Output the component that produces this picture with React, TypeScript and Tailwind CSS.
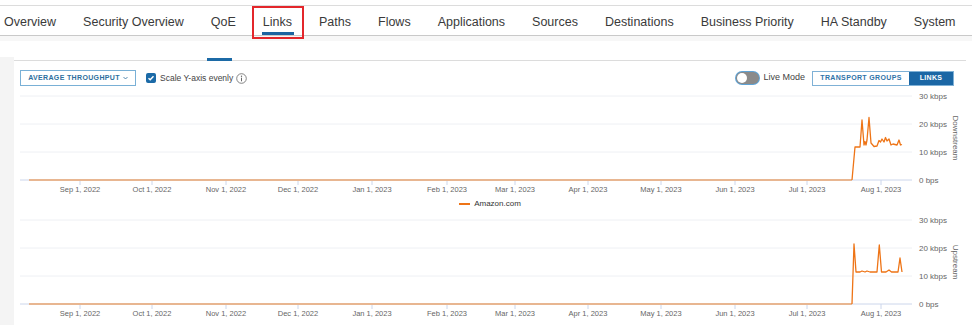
import React from 'react';

const TABS = [
  'Overview',
  'Security Overview',
  'QoE',
  'Links',
  'Paths',
  'Flows',
  'Applications',
  'Sources',
  'Destinations',
  'Business Priority',
  'HA Standby',
  'System',
];

const TICKS = [
  { x: 80, label: 'Sep 1, 2022' },
  { x: 152, label: 'Oct 1, 2022' },
  { x: 226, label: 'Nov 1, 2022' },
  { x: 298, label: 'Dec 1, 2022' },
  { x: 372, label: 'Jan 1, 2023' },
  { x: 447, label: 'Feb 1, 2023' },
  { x: 515, label: 'Mar 1, 2023' },
  { x: 588, label: 'Apr 1, 2023' },
  { x: 661, label: 'May 1, 2023' },
  { x: 735, label: 'Jun 1, 2023' },
  { x: 807, label: 'Jul 1, 2023' },
  { x: 881, label: 'Aug 1, 2023' },
];

// points in page coords, only the part after the step up
const DOWN: [number, number][] = [
  [852, 180], [855, 147], [860, 147], [862, 120], [864, 145], [865, 141.5], [866, 145],
  [867, 140], [869, 117.5], [871, 143], [874, 146.5], [877, 146], [879, 140.5],
  [880.5, 142], [882, 139], [884, 142], [885.5, 137.5], [887, 141], [889, 139],
  [891, 145], [893, 144], [897, 145], [899, 140], [900.5, 145], [902, 144.5],
];

const UP: [number, number][] = [
  [852, 304], [854, 244], [856, 272], [860, 272], [862, 271], [865, 272], [867, 271],
  [870, 272], [877, 272], [879.3, 245], [881.5, 272], [886, 272], [889, 270],
  [891.5, 272], [898, 272], [900, 258], [902, 272],
];

const FONT = '"Liberation Sans", Arial, sans-serif';

function Chart({
  top,
  height,
  base,
  title,
  points,
}: {
  top: number;
  height: number;
  base: number;
  title: string;
  points: [number, number][];
}) {
  const grid = [0, 1, 2, 3].map((i) => base - i * 28);
  const yLabels = ['0 bps', '10 kbps', '20 kbps', '30 kbps'];
  const d = points.map((p, i) => `${i === 0 ? 'M' : 'L'}${p[0]} ${p[1]}`).join(' ');
  return (
    <svg
      width={952}
      height={height}
      viewBox={`14 ${top} 952 ${height}`}
      className="block overflow-visible"
      style={{ fontFamily: FONT }}
    >
      {grid.slice(1).map((y) => (
        <line key={y} x1={20} x2={912} y1={y} y2={y} stroke="#eef0f4" strokeWidth={1} />
      ))}
      <line x1={20} x2={912} y1={base} y2={base} stroke="#ccd6eb" strokeWidth={1} />
      {TICKS.map((t) => (
        <g key={t.label}>
          <line x1={t.x} x2={t.x} y1={base} y2={base + 5} stroke="#ccd6eb" strokeWidth={1} />
          <text x={t.x} y={base + 12} fontSize={7.5} fill="#666" textAnchor="middle">
            {t.label}
          </text>
        </g>
      ))}
      {grid.map((y, i) => (
        <text key={y} x={919} y={y + 3} fontSize={8} fill="#666">
          {yLabels[i]}
        </text>
      ))}
      <text
        x={955}
        y={base - 42}
        fontSize={8}
        fill="#666"
        textAnchor="middle"
        transform={`rotate(90 955 ${base - 42})`}
        dominantBaseline="middle"
      >
        {title}
      </text>
      <line x1={29} x2={852} y1={base} y2={base} stroke="#e8b691" strokeWidth={2} />
      <path d={d} fill="none" stroke="#ee7416" strokeWidth={1.3} strokeLinejoin="round" />
    </svg>
  );
}

export default function App() {
  return (
    <div
      className="relative h-[325px] w-[972px] overflow-hidden bg-white text-[#3a3a3a]"
      style={{ fontFamily: FONT }}
    >
      <div className="h-[6px] border-b border-[#dcdcdc]" />
      <nav className="flex h-[30px] gap-[27px] border-b border-[#c9c9c9] pl-[4px]">
        {TABS.map((tab) => (
          <div key={tab} className="relative flex items-center pt-[3px] text-[12.5px] whitespace-nowrap">
            {tab}
            {tab === 'Links' && (
              <>
                <span className="absolute bottom-0 left-[-1px] right-[-2px] h-[3px] bg-[#1c63a0]" />
                <span className="absolute top-0 bottom-[-4px] left-[-11px] right-[-12px] border-2 border-[#e3262b]" />
              </>
            )}
          </div>
        ))}
      </nav>
      <div className="h-[5px] bg-[#f7f7f7]" />
      <div className="h-[16px]" />
      <div className="flex">
        <div className="w-[14px] self-stretch bg-[#f4f4f4]" />
        <div className="w-[952px]">
          <div className="h-[3px]" />
          <div className="relative h-px bg-[#dcdcdc]">
            <span className="absolute left-[193px] top-[-2px] h-[3px] w-[25px] bg-[#1c6aa6]" />
          </div>
          <div className="flex h-[34px] items-center justify-between pl-[6px] pr-[12px]">
            <div className="flex items-center">
              <button className="flex h-[16px] w-[116px] items-center justify-center gap-[3px] border border-[#79b0d6] bg-white text-[7px] font-bold tracking-[0.05em] text-[#2e6f9e]">
                AVERAGE THROUGHPUT
                <svg width="5" height="4" viewBox="0 0 5 4">
                  <path d="M0.5 1 L2.5 3 L4.5 1" fill="none" stroke="#2e6f9e" strokeWidth="0.8" />
                </svg>
              </button>
              <div className="ml-[10px] flex h-[10px] w-[10px] items-center justify-center rounded-[2px] bg-[#1b6aa7]">
                <svg width="8" height="8" viewBox="0 0 8 8">
                  <path d="M1.5 4.2 L3.2 5.8 L6.5 2.2" fill="none" stroke="white" strokeWidth="1.4" />
                </svg>
              </div>
              <span className="ml-[4px] text-[8.5px] text-[#444]">Scale Y-axis evenly</span>
              <svg className="ml-[3px]" width="11" height="11" viewBox="0 0 11 11">
                <circle cx="5.5" cy="5.5" r="4.8" fill="none" stroke="#666" strokeWidth="0.8" />
                <circle cx="5.5" cy="3.2" r="0.7" fill="#666" />
                <path d="M5.5 4.7 V8.3" stroke="#666" strokeWidth="1" />
              </svg>
            </div>
            <div className="flex items-center">
              <div className="flex h-[12px] w-[23px] items-center rounded-full bg-[#8a8a8a] ring-1 ring-[#5ea3d6]">
                <span className="ml-[1px] h-[10px] w-[10px] rounded-full bg-white" />
              </div>
              <span className="ml-[4px] text-[9px] text-[#444]">Live Mode</span>
              <div className="ml-[7px] flex h-[15px] border border-[#7fb1d6] text-[7px] font-bold tracking-[0.05em]">
                <div className="flex w-[96px] items-center justify-center bg-white text-[#2f73a8]">
                  TRANSPORT GROUPS
                </div>
                <div className="flex w-[44px] items-center justify-center bg-[#1b67a5] text-white">
                  LINKS
                </div>
              </div>
            </div>
          </div>
          <Chart top={95} height={102} base={180} title="Downstream" points={DOWN} />
          <div className="flex h-[14px] items-center justify-center gap-[4px]">
            <span className="h-[2px] w-[11px] bg-[#ee7416]" />
            <span className="text-[8px] font-normal text-[#333]">Amazon.com</span>
          </div>
          <Chart top={211} height={114} base={304} title="Upstream" points={UP} />
        </div>
      </div>
    </div>
  );
}
